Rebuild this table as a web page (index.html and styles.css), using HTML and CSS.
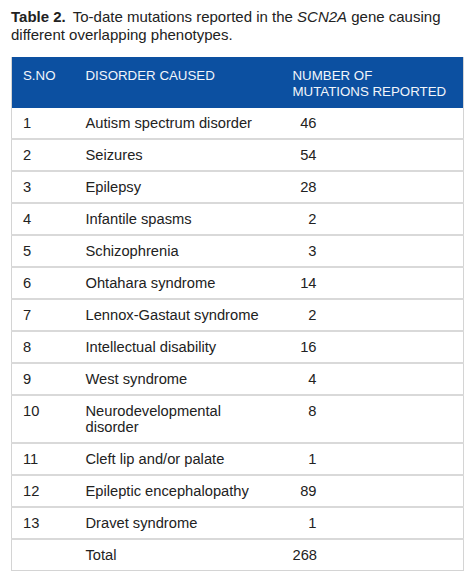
FILE: index.html
```html
<!DOCTYPE html>
<html>
<head>
<meta charset="utf-8">
<link rel="stylesheet" href="styles.css">
</head>
<body>
<div class="page">
  <div class="caption">
    <div class="cap-line"><span class="label">Table 2.</span><span>To-date mutations reported in the </span><i>SCN2A</i><span> gene causing</span></div>
    <div class="cap-line">different overlapping phenotypes.</div>
  </div>
  <table class="tbl">
    <colgroup>
      <col class="c1"><col class="c2"><col class="c3">
    </colgroup>
    <thead>
      <tr><th>S.NO</th><th>DISORDER CAUSED</th><th>NUMBER OF<br>MUTATIONS REPORTED</th></tr>
    </thead>
    <tbody>
      <tr><td>1</td><td>Autism spectrum disorder</td><td><span class="num">46</span></td></tr>
      <tr><td>2</td><td>Seizures</td><td><span class="num">54</span></td></tr>
      <tr><td>3</td><td>Epilepsy</td><td><span class="num">28</span></td></tr>
      <tr><td>4</td><td>Infantile spasms</td><td><span class="num">2</span></td></tr>
      <tr><td>5</td><td>Schizophrenia</td><td><span class="num">3</span></td></tr>
      <tr><td>6</td><td>Ohtahara syndrome</td><td><span class="num">14</span></td></tr>
      <tr><td>7</td><td>Lennox-Gastaut syndrome</td><td><span class="num">2</span></td></tr>
      <tr><td>8</td><td>Intellectual disability</td><td><span class="num">16</span></td></tr>
      <tr><td>9</td><td>West syndrome</td><td><span class="num">4</span></td></tr>
      <tr><td>10</td><td>Neurodevelopmental<br>disorder</td><td><span class="num">8</span></td></tr>
      <tr><td>11</td><td>Cleft lip and/or palate</td><td><span class="num">1</span></td></tr>
      <tr><td>12</td><td>Epileptic encephalopathy</td><td><span class="num">89</span></td></tr>
      <tr><td>13</td><td>Dravet syndrome</td><td><span class="num">1</span></td></tr>
      <tr><td></td><td>Total</td><td><span class="num">268</span></td></tr>
    </tbody>
  </table>
</div>
</body>
</html>
```
FILE: styles.css
```css
html, body {
  margin: 0;
  padding: 0;
  background: #ffffff;
}
.page {
  padding: 8px 11px 0 11px;
  font-family: "Liberation Sans", Arial, sans-serif;
  color: #222222;
}
.caption {
  margin: 0 0 13px 0;
  font-size: 15px;
  line-height: 18px;
}
.cap-line {
  white-space: nowrap;
}
.label {
  font-weight: bold;
  margin-right: 7px;
}
.tbl {
  width: 452px;
  border-collapse: collapse;
  table-layout: fixed;
  font-size: 14.7px;
  line-height: 16px;
  border: 1.5px solid #d4d4d4;
  border-top: none;
}
.c1 { width: 63px; }
.c2 { width: 207px; }
.c3 { width: 182px; }
.tbl th {
  background: #0c50a1;
  color: #f2f6fb;
  font-weight: normal;
  font-size: 13.3px;
  text-align: left;
  padding: 11px 0 8px 11px;
  vertical-align: top;
}
.tbl td {
  padding: 7px 0 7px 11px;
  vertical-align: top;
  border-bottom: 2px solid #d9d9d9;
}
.tbl tbody tr:last-child td {
  border-bottom: 1.5px solid #d4d4d4;
}
.num {
  display: inline-block;
  width: 24px;
  text-align: right;
}
```
